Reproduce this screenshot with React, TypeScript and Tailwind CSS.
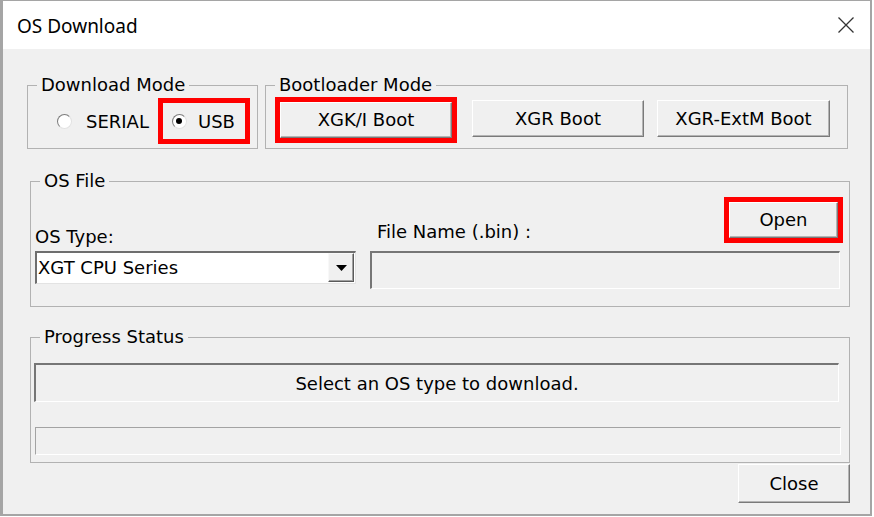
import type { ReactNode } from "react"

const raised =
  "bg-[#f0f0f0] border border-t-white border-l-white border-r-[#7a7a7a] border-b-[#7a7a7a] shadow-[inset_-1px_-1px_0_#b4b4b4]"

const sunken =
  "border-t-2 border-l-2 border-b border-r border-t-[#767676] border-l-[#767676] border-b-white border-r-white"

function Radio({ checked }: { checked?: boolean }) {
  return (
    <span className="flex items-center justify-center w-[15px] h-[15px] rounded-full bg-white border-[1.5px] border-t-[#7c7c7c] border-l-[#7c7c7c] border-r-[#e2e2e2] border-b-[#e2e2e2]">
      {checked && <span className="w-[6px] h-[6px] rounded-full bg-black" />}
    </span>
  )
}

function GroupBox({ title, className, children }: { title: string; className?: string; children: ReactNode }) {
  return (
    <fieldset className={`border border-[#b2b2b2] ${className ?? ""}`}>
      <legend className="ml-[9px] px-[4px] leading-[20px]">{title}</legend>
      {children}
    </fieldset>
  )
}

function Button({ label, className }: { label: string; className?: string }) {
  return (
    <button className={`${raised} flex items-center justify-center leading-none ${className ?? ""}`}>
      {label}
    </button>
  )
}

export default function App() {
  return (
    <div className="w-[874px] h-[517px] bg-white">
      <div
        className="w-[872px] h-[516px] flex flex-col bg-[#f0f0f0] border-t border-l-[3px] border-r-2 border-b-2 border-[#a5a5a5] text-black text-[18px]"
        style={{ fontFamily: '"DejaVu Sans", Tahoma, sans-serif' }}
      >
        {/* title bar */}
        <div className="h-[48px] shrink-0 bg-white flex items-center justify-between pl-[14px] pr-[16px]">
          <span className="mt-[3px] text-[19px] text-black" style={{ fontFamily: '"Noto Sans", "Segoe UI", sans-serif' }}>
            OS Download
          </span>
          <svg width="16" height="16" viewBox="0 0 16 16" className="mb-[1px]">
            <path d="M0.5 0.5 L15.5 15.5 M15.5 0.5 L0.5 15.5" stroke="#333" strokeWidth="1.3" fill="none" />
          </svg>
        </div>

        {/* body */}
        <div className="flex-1 flex flex-col pl-[24px] pt-[26px]">
          <div className="flex">
            <GroupBox title="Download Mode" className="w-[231px]">
              <div className="h-[53px] flex items-start pt-[3px] pl-[29px]">
                <div className="h-[46px] flex items-center gap-[14px]">
                  <Radio />
                  <span>SERIAL</span>
                </div>
                <div className="ml-[9px] w-[92px] h-[46px] border-[5px] border-[#ff0000] flex items-center pl-[9px] gap-[11px]">
                  <Radio checked />
                  <span>USB</span>
                </div>
              </div>
            </GroupBox>

            <GroupBox title="Bootloader Mode" className="ml-[7px] w-[583px]">
              <div className="h-[53px] flex items-start pt-[2px] pl-[9px]">
                <div className="w-[182px] h-[46px] border-[5px] border-[#ff0000] flex">
                  <Button label="XGK/I Boot" className="w-full h-full" />
                </div>
                <Button label="XGR Boot" className="ml-[15px] mt-[3px] w-[172px] h-[37px]" />
                <Button label="XGR-ExtM Boot" className="ml-[13px] mt-[3px] w-[173px] h-[37px]" />
              </div>
            </GroupBox>
          </div>

          <GroupBox title="OS File" className="mt-[22px] ml-[3px] w-[820px]">
            <div className="h-[115px] flex pl-[4px] pr-[9px]">
              <div className="w-[321px] flex flex-col">
                <span className="mt-[36px] leading-[20px]">OS Type:</span>
                <div className="mt-[4px] h-[33px] bg-white flex items-start border-t-2 border-l-2 border-b border-r border-t-[#6e6e6e] border-l-[#6e6e6e] border-b-[#e3e3e3] border-r-[#e3e3e3]">
                  <span className="flex-1 pl-[1px] leading-[30px]">XGT CPU Series</span>
                  <div className="w-[26px] h-[29px] mr-[1px] bg-[#f0f0f0] flex items-center justify-center border border-t-[#f8f8f8] border-l-[#f8f8f8] border-r-[#5a5a5a] border-b-[#5a5a5a] shadow-[inset_-1px_-1px_0_#a0a0a0]">
                    <svg width="11" height="6" viewBox="0 0 11 6">
                      <path d="M0 0 H11 L5.5 6 Z" fill="#000" />
                    </svg>
                  </div>
                </div>
              </div>
              <div className="flex-1 ml-[14px] flex flex-col">
                <div className="flex items-start">
                  <span className="mt-[31px] pl-[7px] leading-[20px]">File Name (.bin) :</span>
                  <div className="ml-auto -mr-[3px] mt-[6px] w-[119px] h-[46px] border-[5px] border-[#ff0000] flex">
                    <Button label="Open" className="w-full h-full" />
                  </div>
                </div>
                <div className={`mt-[8px] h-[38px] bg-[#f0f0f0] ${sunken}`} />
              </div>
            </div>
          </GroupBox>

          <GroupBox title="Progress Status" className="mt-[20px] ml-[3px] w-[820px]">
            <div className="h-[115px] flex flex-col pl-[3px] pr-[10px]">
              <div className={`mt-[16px] h-[39px] flex items-center justify-center bg-[#f0f0f0] ${sunken}`}>
                Select an OS type to download.
              </div>
              <div className="mt-[25px] ml-[1px] -mr-[2px] h-[28px] bg-[#f0f0f0] border border-t-[#a3a3a3] border-l-[#a3a3a3] border-b-white border-r-white" />
            </div>
          </GroupBox>

          <div className="ml-[3px] w-[820px] flex justify-end">
            <Button label="Close" className="mt-[1px] w-[112px] h-[39px]" />
          </div>
        </div>
      </div>
    </div>
  )
}
